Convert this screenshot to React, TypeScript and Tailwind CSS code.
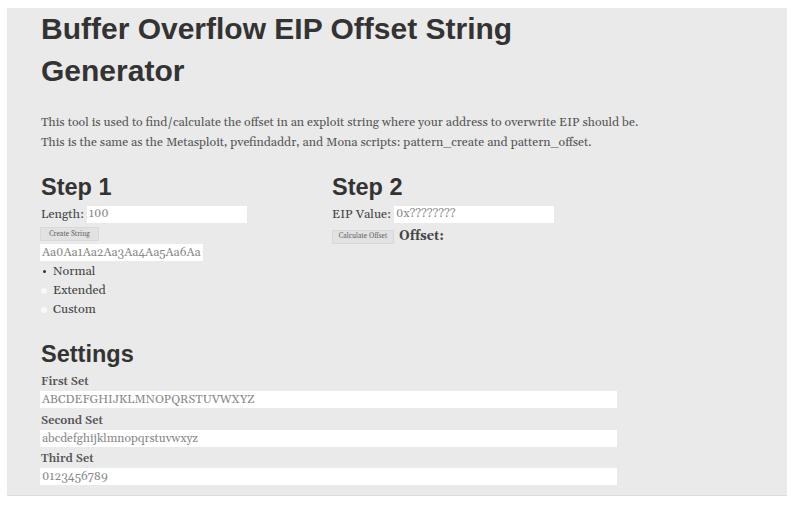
import React from 'react';

const serif = "font-['Gelasio','Liberation_Serif',Georgia,serif]";
const sans = "font-['Liberation_Sans',Arial,sans-serif]";

const Field = ({ value, className }: { value: string; className: string }) => (
  <input
    readOnly
    value={value}
    className={`h-[17px] bg-white px-[2px] text-[12px] text-[#888] outline-none ${serif} ${className}`}
  />
);

const Btn = ({ children, className = '' }: { children: React.ReactNode; className?: string }) => (
  <button
    className={`block h-[14px] border border-[#d8d8d8] bg-[#e2e2e2] text-[7px] leading-none text-[#666] ${serif} ${className}`}
  >
    {children}
  </button>
);

const Radio = ({ label, checked }: { label: string; checked?: boolean }) => (
  <div className="flex h-[19px] items-center">
    <span className="flex w-[12px] items-center">
      {checked ? (
        <span className="ml-[2px] h-[3px] w-[3px] rounded-full bg-[#333]" />
      ) : (
        <span className="h-[6px] w-[6px] rounded-full bg-[#f8f8f8]" />
      )}
    </span>
    <span className="text-[12.5px] text-[#444]">{label}</span>
  </div>
);

export default function App() {
  return (
    <div className="h-[507px] w-[797px] overflow-hidden bg-white pt-[11px] pl-[7px]">
      <div className={`h-[488px] w-[780px] border-b border-[#dcdcdc] bg-[#eaeaea] pl-[34px] ${serif}`}>
        <h1 className={`-mt-[3px] w-[520px] text-[30px] font-bold leading-[42px] text-[#333] ${sans}`}>
          Buffer Overflow EIP Offset String Generator
        </h1>

        <p className="mt-[21px] text-[12.3px] leading-[20px] text-[#555]">
          This tool is used to find/calculate the offset in an exploit string where your address to overwrite EIP should be.
          <br />
          This is the same as the Metasploit, pvefindaddr, and Mona scripts: pattern_create and pattern_offset.
        </p>

        <div className="mt-[20px] grid grid-cols-[291px_1fr]">
          <div>
            <h2 className={`mb-[4px] text-[23.5px] font-bold leading-[28px] text-[#333] ${sans}`}>Step 1</h2>
            <div className="flex h-[18px] items-center text-[12.5px] text-[#444]">
              <span className="mr-[3px]">Length:</span>
              <Field value="100" className="w-[160px]" />
            </div>
            <Btn className="mt-[4px] -ml-px w-[59px]">Create String</Btn>
            <Field value="Aa0Aa1Aa2Aa3Aa4Aa5Aa6Aa" className="mt-[3px] -ml-px block w-[163px]" />
            <div className="mt-[1px]">
              <Radio label="Normal" checked />
              <Radio label="Extended" />
              <Radio label="Custom" />
            </div>
          </div>
          <div>
            <h2 className={`mb-[4px] text-[23.5px] font-bold leading-[28px] text-[#333] ${sans}`}>Step 2</h2>
            <div className="flex h-[18px] items-center text-[12.5px] text-[#444]">
              <span className="mr-[3px]">EIP Value:</span>
              <Field value="0x????????" className="w-[160px]" />
            </div>
            <div className="mt-[4px] flex items-center">
              <Btn className="w-[62px]">Calculate Offset</Btn>
              <span className="ml-[5px] text-[13px] font-bold text-[#444]">Offset:</span>
            </div>
          </div>
        </div>

        <h2 className={`mt-[21px] mb-[4px] text-[23.5px] font-bold leading-[28px] text-[#333] ${sans}`}>Settings</h2>
        <div className="text-[11.5px] font-semibold text-[#555]">
          <div className="leading-[19px]">First Set</div>
          <Field value="ABCDEFGHIJKLMNOPQRSTUVWXYZ" className="-ml-px block w-[577px] font-normal" />
          <div className="mt-[3px] leading-[19px]">Second Set</div>
          <Field value="abcdefghijklmnopqrstuvwxyz" className="-ml-px block w-[577px] font-normal" />
          <div className="mt-[2px] leading-[19px]">Third Set</div>
          <Field value="0123456789" className="-ml-px block w-[577px] font-normal" />
        </div>
      </div>
    </div>
  );
}
